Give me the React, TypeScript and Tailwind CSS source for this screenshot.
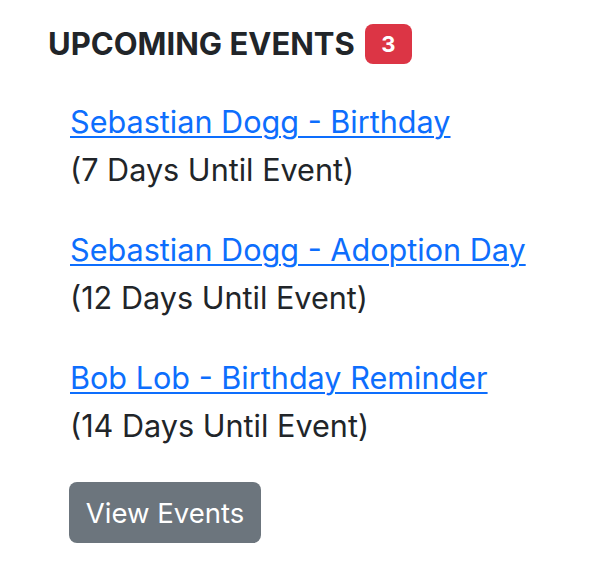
const events = [
  { title: "Sebastian Dogg - Birthday", days: 7 },
  { title: "Sebastian Dogg - Adoption Day", days: 12 },
  { title: "Bob Lob - Birthday Reminder", days: 14 },
];

export default function App() {
  return (
    <div className="min-h-screen bg-white px-[48px] pt-[20px] font-['Inter',sans-serif] text-[30.6px] leading-[48px] text-[#212529]">
      <h2 className="flex items-center text-[31px] font-bold">
        UPCOMING EVENTS
        <span className="ml-[10px] flex h-[40px] w-[47px] items-center justify-center rounded-[8px] bg-[#dc3545] text-[22px] leading-none font-bold text-white">
          3
        </span>
      </h2>
      <ul className="mt-[30px] pl-[22px]">
        {events.map((event) => (
          <li key={event.title} className="mb-[32px]">
            <a
              href="#"
              className="text-[#0d6efd] underline decoration-[2px] underline-offset-[3px]"
            >
              {event.title}
            </a>
            <div>({event.days} Days Until Event)</div>
          </li>
        ))}
      </ul>
      <div className="pl-[21px]">
        <button className="h-[61px] w-[192px] rounded-[8px] bg-[#6c757d] text-[27.5px] text-white">
          View Events
        </button>
      </div>
    </div>
  );
}
